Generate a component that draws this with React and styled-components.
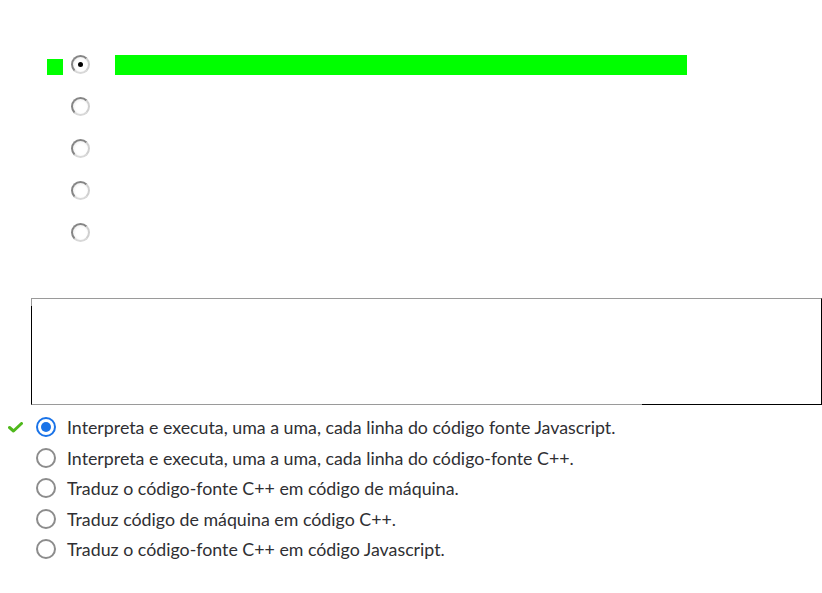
import React from "react";
import styled, { createGlobalStyle } from "styled-components";

const Global = createGlobalStyle`
  html, body { margin: 0; padding: 0; background: #fff; }
  body { font-family: Lato, "Open Sans", sans-serif; }
`;

const Page = styled.div`
  width: 822px;
  height: 593px;
  display: flex;
  flex-direction: column;
  overflow: hidden;
`;

const OldList = styled.div`
  display: flex;
  flex-direction: column;
  padding-top: 43px;
  padding-left: 47px;
`;

const OldRow = styled.div`
  display: flex;
  align-items: center;
  height: 42px;
`;

const Marker = styled.span`
  width: 16px;
  height: 16px;
  margin-top: 6px;
  background: ${(p) => (p.$on ? "#00ff00" : "transparent")};
  flex: none;
`;

const OldRadio = styled.span`
  width: 15px;
  height: 15px;
  margin-left: 8px;
  border-radius: 50%;
  border: 2px solid;
  border-color: #858585 #cfcfcf #d8d8d8 #858585;
  background: radial-gradient(circle at 55% 55%, #ffffff 45%, #e4e4e4 100%);
  display: flex;
  align-items: center;
  justify-content: center;
  flex: none;
  &::after {
    content: "";
    width: 5px;
    height: 5px;
    border-radius: 50%;
    background: ${(p) => (p.$checked ? "#000" : "transparent")};
  }
`;

const GreenBar = styled.span`
  width: 572px;
  height: 20px;
  margin-left: 25px;
  margin-top: 2px;
  background: #00ff00;
`;

const AnswerBox = styled.div`
  position: relative;
  margin-top: 45px;
  margin-left: 31px;
  width: 789px;
  height: 105px;
  border: 1px solid;
  border-color: #9a9a9a #000 #9a9a9a #000;
  &::before {
    content: "";
    position: absolute;
    left: -1px;
    top: -1px;
    width: 1px;
    height: 8px;
    background: #9a9a9a;
  }
  &::after {
    content: "";
    position: absolute;
    left: 610px;
    right: -1px;
    bottom: -1px;
    height: 1px;
    background: #000;
  }
`;

const Choices = styled.div`
  display: flex;
  flex-direction: column;
  margin-top: 7px;
`;

const Choice = styled.label`
  display: flex;
  align-items: center;
  height: 30.5px;
  font-size: 17.8px;
  color: #2f2f33;
  white-space: nowrap;
`;

const CheckSlot = styled.span`
  width: 36px;
  display: flex;
  justify-content: flex-start;
  padding-left: 8px;
  box-sizing: border-box;
  flex: none;
`;

const Radio = styled.span`
  width: 20px;
  height: 20px;
  box-sizing: border-box;
  border-radius: 50%;
  border: ${(p) => (p.$checked ? "2px solid #1a73e8" : "2px solid #8c8c8c")};
  display: flex;
  align-items: center;
  justify-content: center;
  flex: none;
  margin-right: 11px;
  &::after {
    content: "";
    width: 10px;
    height: 10px;
    border-radius: 50%;
    background: ${(p) => (p.$checked ? "#1a73e8" : "transparent")};
  }
`;

const Check = () => (
  <svg width="15" height="11" viewBox="0 0 15 11">
    <path d="M1.5 5.5 L5.5 9 L13.5 1.5" fill="none" stroke="#4fb81c" strokeWidth="3" strokeLinecap="round" strokeLinejoin="round" />
  </svg>
);

const options = [
  "Interpreta e executa, uma a uma, cada linha do código fonte Javascript.",
  "Interpreta e executa, uma a uma, cada linha do código-fonte C++.",
  "Traduz o código-fonte C++ em código de máquina.",
  "Traduz código de máquina em código C++.",
  "Traduz o código-fonte C++ em código Javascript.",
];

export default function App() {
  return (
    <Page>
      <Global />
      <OldList>
        {[0, 1, 2, 3, 4].map((i) => (
          <OldRow key={i}>
            <Marker $on={i === 0} />
            <OldRadio $checked={i === 0} />
            {i === 0 && <GreenBar />}
          </OldRow>
        ))}
      </OldList>
      <AnswerBox />
      <Choices>
        {options.map((t, i) => (
          <Choice key={i}>
            <CheckSlot>{i === 0 && <Check />}</CheckSlot>
            <Radio $checked={i === 0} />
            {t}
          </Choice>
        ))}
      </Choices>
    </Page>
  );
}
